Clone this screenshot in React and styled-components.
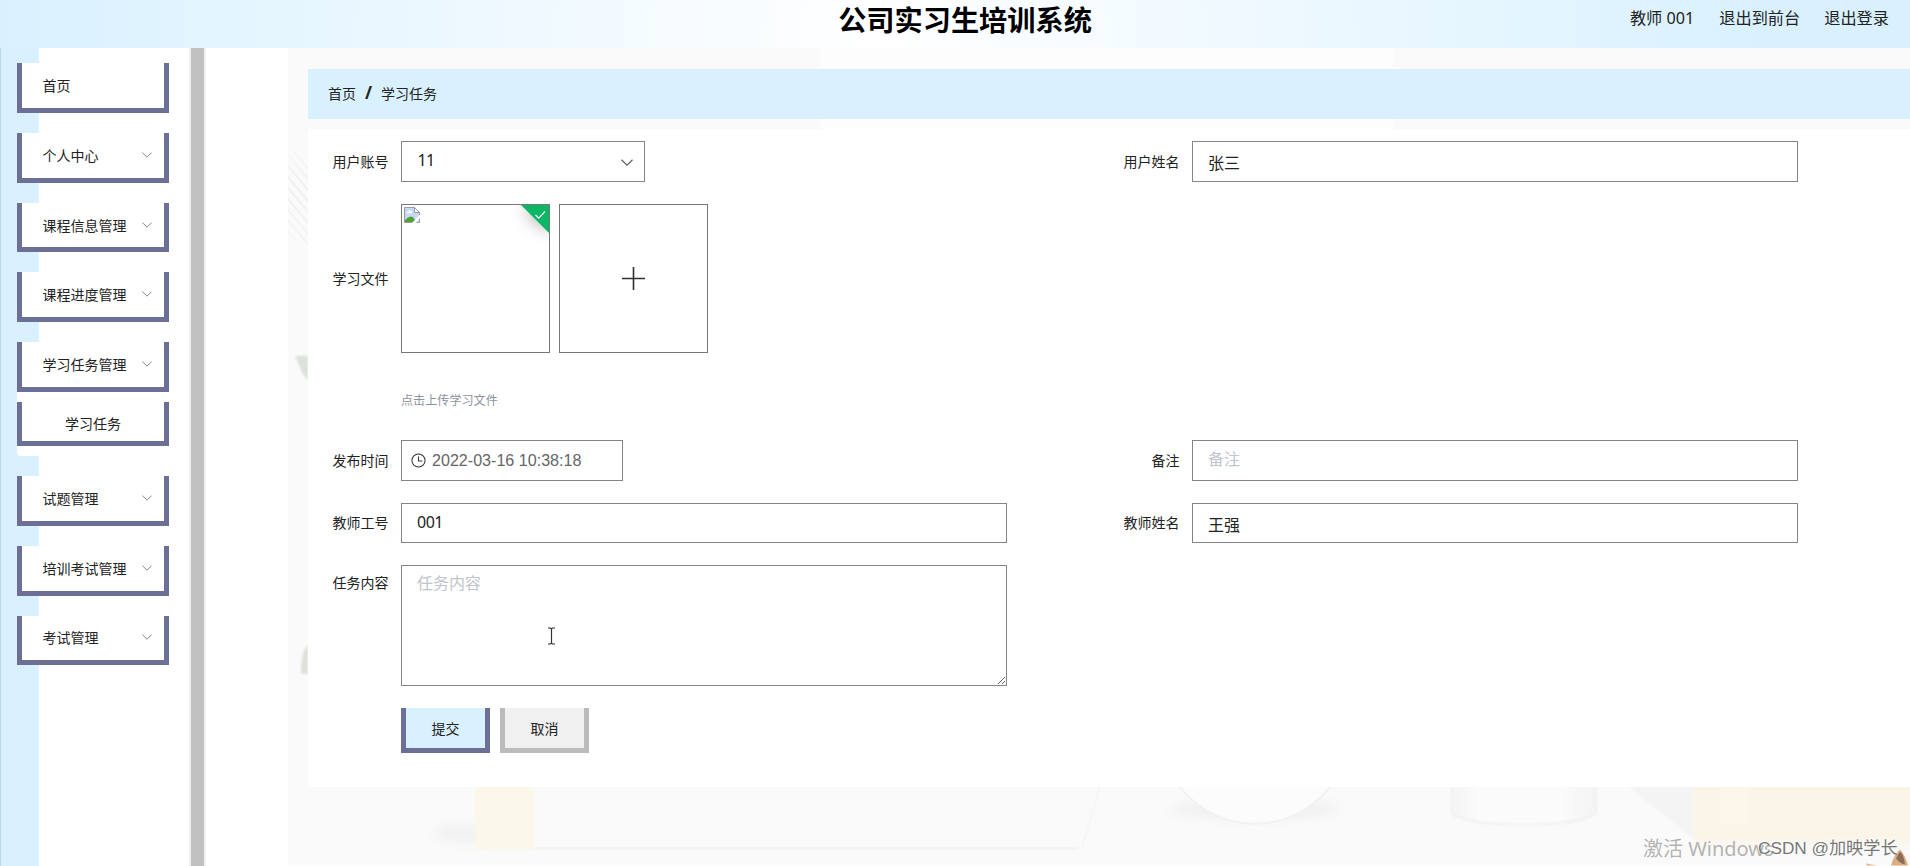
import React, { useState } from 'react'
import styled, { createGlobalStyle, css } from 'styled-components'

const menus = [
  { name: '首页' },
  { name: '个人中心', children: [] },
  { name: '课程信息管理', children: [] },
  { name: '课程进度管理', children: [] },
  { name: '学习任务管理', children: ['学习任务'] },
  { name: '试题管理', children: [] },
  { name: '培训考试管理', children: [] },
  { name: '考试管理', children: [] },
]

const Arrow = ({ width, color }) => (
  <svg width={width} height={width * 0.6} viewBox="0 0 10 6" fill="none" stroke={color}>
    <path d="M0.4 0.6 L5 5.2 L9.6 0.6" strokeWidth="1" />
  </svg>
)

const Scene = () => (
  <Backdrop viewBox="0 0 1622 818" preserveAspectRatio="none">
    <defs>
      <filter id="soft" x="-30%" y="-80%" width="160%" height="260%">
        <feGaussianBlur stdDeviation="6" />
      </filter>
      <filter id="edge">
        <feGaussianBlur stdDeviation="1" />
      </filter>
      <pattern id="weave" width="7" height="7" patternUnits="userSpaceOnUse" patternTransform="rotate(-40)">
        <path d="M1 0V7" stroke="#eef0ed" strokeWidth="2" />
      </pattern>
      <linearGradient id="weaveFade" x1="0" y1="0" x2="0" y2="1">
        <stop offset="0" stopColor="#fafafa" />
        <stop offset="0.4" stopColor="#fafafa" stopOpacity="0" />
        <stop offset="1" stopColor="#fafafa" stopOpacity="0.6" />
      </linearGradient>
      <linearGradient id="sand" x1="0" y1="0" x2="0" y2="1">
        <stop offset="0.75" stopColor="#faf5e7" />
        <stop offset="1" stopColor="#faf5e7" stopOpacity="0" />
      </linearGradient>
      <linearGradient id="cup" x1="0" y1="0" x2="1" y2="0">
        <stop offset="0" stopColor="#f5f5f5" />
        <stop offset="0.2" stopColor="#fbfbfb" />
        <stop offset="0.75" stopColor="#fbfbfb" />
        <stop offset="1" stopColor="#f4f4f4" />
      </linearGradient>
    </defs>
    <path d="M0 0H1622V818H0Z" fill="#fafafa" />
    <path d="M532 0H905V81H532Z" fill="#fdfdfd" />
    <path d="M905 0H1105V81H905Z" fill="#fdfdfd" />
    {/* left edge: blanket and table corners */}
    <path d="M0 92 L20 112 V205 L0 185Z" fill="url(#weave)" />
    <path d="M0 92H20V205H0Z" fill="url(#weaveFade)" />
    <path d="M7 308H20V333L14 325Z" fill="#dde1db" filter="url(#edge)" />
    <path d="M15 605L20 597V626H13V618Z" fill="#dde0da" filter="url(#edge)" />
    {/* book */}
    <ellipse cx="176" cy="786" rx="30" ry="9" fill="#f1f1f1" filter="url(#soft)" />
    <path d="M187 730H246V802H187Z" fill="#fbf7ea" filter="url(#edge)" />
    <path d="M246 799.5H790V802.5H246Z" fill="#f4f4f4" />
    <path d="M794 800L812 738" stroke="#f6f6f6" strokeWidth="2" />
    {/* plate */}
    <ellipse cx="967" cy="762" rx="85" ry="9" fill="#efefef" filter="url(#soft)" />
    <path d="M888 735Q920 776 967 776T1046 735Z" fill="#fcfcfc" stroke="#f2f2f2" strokeWidth="2" />
    {/* cup */}
    <path d="M1164 730V766Q1180 777 1236 777T1308 766V730Z" fill="url(#cup)" stroke="#f0f0f0" strokeWidth="2" filter="url(#edge)" />
    <path d="M1336 735H1406V792Z" fill="#f4f4f4" filter="url(#edge)" />
    <path d="M1406 735H1622V805H1406Z" fill="url(#sand)" />
    <path d="M1432 735H1461V775H1432Z" fill="#fcf7ea" />
    {/* puppy */}
    <path d="M1603 818Q1606 807 1612 802Q1617 807 1620 818Z" fill="#dcae82" />
    <path d="M1608 811L1612 804Q1616 808 1617 817Q1612 816 1608 811Z" fill="#8c6b58" />
    <path d="M1578 816L1589 818H1579Z" fill="#e2b386" />
  </Backdrop>
)

const BrokenImage = () => (
  <svg width="16" height="16" viewBox="0 0 16 16">
    <path d="M0.5 0.5H10.5L15.5 5.5V15.5H0.5Z" fill="#c6d8f6" stroke="#9a9a9a" />
    <path d="M10.5 0.5V5.5H15.5Z" fill="#fff" stroke="#9a9a9a" />
    <path d="M2.5 6.2Q2.5 4.4 4.3 4.4Q5 2.6 6.7 3.4Q8.4 3.6 8.3 6.2Z" fill="#fff" />
    <path d="M1 15V13Q5 8 9 10L12 15Z" fill="#4fa336" />
    <path d="M8 16L16 7.5V11L12 16Z" fill="#fff" />
  </svg>
)

export default () => {
  const [content, setContent] = useState('')
  const [remark, setRemark] = useState('')

  return (
    <Page>
      <GlobalStyle />
      <Header>
        <Title>公司实习生培训系统</Title>
        <HeaderLinks>
          <HeaderLink $gap={25}>教师 001</HeaderLink>
          <HeaderLink $gap={24}>退出到前台</HeaderLink>
          <HeaderLink>退出登录</HeaderLink>
        </HeaderLinks>
      </Header>
      <Body>
        <Aside>
          <Menu>
            {menus.map(({ name, children }) => (
              <MenuGroup key={name}>
                <MenuItem>
                  {name}
                  {children && <Arrow width={10} color="#83868c" />}
                </MenuItem>
                {children && children.length > 0 && (
                  <SubMenu>
                    {children.map(child => (
                      <SubItem key={child}>{child}</SubItem>
                    ))}
                  </SubMenu>
                )}
              </MenuGroup>
            ))}
          </Menu>
          <Scrollbar />
        </Aside>
        <Main>
          <Scene />
          <Content>
            <Breadcrumb>
              <span>首页</span>
              <Slash>/</Slash>
              <span>学习任务</span>
            </Breadcrumb>
            <Form>
              <Row>
                <Field>
                  <Label>用户账号</Label>
                  <Select>
                    <span>11</span>
                    <Arrow width={12} color="#606266" />
                  </Select>
                </Field>
                <Field>
                  <Label>用户姓名</Label>
                  <Input defaultValue="张三" $cjk />
                </Field>
              </Row>
              <Field>
                <Label>学习文件</Label>
                <Uploads>
                  <Picture>
                    <BrokenImage />
                    <Done>
                      <svg width="28" height="28" viewBox="0 0 28 28" fill="none">
                        <path d="M0 0H28V28Z" fill="#0bb765" />
                        <path d="M14.5 10L17.7 13.2L24 6.5" stroke="#fff" strokeWidth="1.1" />
                      </svg>
                    </Done>
                  </Picture>
                  <Picture $center>
                    <svg width="23" height="23" viewBox="0 0 23 23" stroke="#303133" strokeWidth="1.6">
                      <path d="M11.5 0V23M0 11.5H23" />
                    </svg>
                  </Picture>
                </Uploads>
              </Field>
              <Tip>点击上传学习文件</Tip>
              <Row>
                <Field>
                  <Label>发布时间</Label>
                  <DateInput>
                    <svg width="15" height="15" viewBox="0 0 16 16" fill="none" stroke="#303133">
                      <circle cx="8" cy="8" r="7" strokeWidth="1.1" />
                      <path d="M8 3.8V8.5H12" strokeWidth="1.1" />
                    </svg>
                    2022-03-16 10:38:18
                  </DateInput>
                </Field>
                <Field>
                  <Label>备注</Label>
                  <Input placeholder="备注" value={remark} onChange={e => setRemark(e.target.value)} />
                </Field>
              </Row>
              <Row>
                <Field>
                  <Label>教师工号</Label>
                  <Input defaultValue="001" />
                </Field>
                <Field>
                  <Label>教师姓名</Label>
                  <Input defaultValue="王强" $cjk />
                </Field>
              </Row>
              <Field $top>
                <Label>任务内容</Label>
                <Textarea placeholder="任务内容" value={content} onChange={e => setContent(e.target.value)} />
              </Field>
              <Buttons>
                <Button $primary>提交</Button>
                <Button>取消</Button>
              </Buttons>
            </Form>
          </Content>
        </Main>
      </Body>
      <Cursor width="9" height="18" viewBox="0 0 9 18" fill="none" stroke="#333">
        <path d="M1 1H3.5L4.5 2L5.5 1H8M4.5 2V16M1 17H3.5L4.5 16L5.5 17H8" strokeWidth="1.2" />
      </Cursor>
      <Activate>激活 Windows</Activate>
      <Watermark>CSDN @加映学长</Watermark>
    </Page>
  )
}

const GlobalStyle = createGlobalStyle`
  * { box-sizing: border-box; }
  body {
    margin: 0;
    overflow: hidden;
    font-family: 'Noto Sans', 'Noto Sans CJK SC', sans-serif;
    font-size: 14px;
    color: #222;
  }
`

const Page = styled.div`
  position: relative;
  display: flex;
  flex-direction: column;
  width: 1910px;
  height: 866px;
  overflow: hidden;
  background: #fff;
`

const Header = styled.header`
  display: grid;
  grid-template-columns: 1fr auto 1fr;
  height: 48.4px;
  flex: none;
  padding: 0 21px 0 0;
  background: radial-gradient(circle at 880px 40px, #fff 0, #d9f1ff 880px);
`

const Title = styled.h1`
  grid-column: 2;
  margin: 0 0 0 41px;
  font: bold 28.2px/38px 'Noto Sans CJK SC', sans-serif;
  color: #000;
`

const HeaderLinks = styled.nav`
  display: flex;
  justify-content: flex-end;
`

const HeaderLink = styled.span`
  margin-right: ${p => p.$gap || 0}px;
  font-size: 16.2px;
  line-height: 37px;
`

const Body = styled.div`
  display: flex;
  flex: 1;
  min-height: 0;
`

const Aside = styled.aside`
  display: flex;
  justify-content: space-between;
  width: 206px;
  border-left: 1px solid #bcd8e8;
  background: linear-gradient(to right, #d9f1ff 37px, #fff 39px);
`

const Menu = styled.div`
  width: 152px;
  margin: 15px 0 0 16px;
`

const MenuGroup = styled.div`
  margin-bottom: 20px;
`

const box = css`
  border: solid #6d7096;
  border-width: 0 5px 5px;
  background: #fff;
`

const MenuItem = styled.div`
  ${box};
  display: flex;
  align-items: center;
  justify-content: space-between;
  height: 49.7px;
  padding: 0 12px 1px 20.5px;
`

const SubMenu = styled.div`
  padding: 10px 0;
  border-radius: 0 0 4px 4px;
  background: #fff;
`

const SubItem = styled.div`
  ${box};
  height: 44.3px;
  line-height: 44px;
  text-align: center;
`

const Scrollbar = styled.div`
  width: 17px;
  border: solid #f1f1f1;
  border-width: 0 2px;
  background: #c1c1c1;
`

const Main = styled.main`
  position: relative;
  flex: 1;
  margin-left: 82px;
  padding: 20.6px 0 0 20px;
`

const Backdrop = styled.svg`
  position: absolute;
  inset: 0;
  width: 100%;
  height: 100%;
`

const Content = styled.div`
  position: relative;
`

const Breadcrumb = styled.div`
  display: flex;
  align-items: center;
  height: 50px;
  padding: 0 20px 2px;
  background: #d9f1ff;
`

const Slash = styled.b`
  width: 25px;
  text-align: center;
  font-size: 17px;
`

const Form = styled.form`
  display: flex;
  flex-direction: column;
  height: 658px;
  margin-top: 10px;
  padding: 12px 0 0 13px;
  background: #fff;
`

const Row = styled.div`
  display: grid;
  grid-template-columns: 791px 791px;
`

const Field = styled.div`
  display: flex;
  align-items: ${p => (p.$top ? 'flex-start' : 'center')};
  margin-bottom: 22px;
  ${p => p.$top && css`
    ${Label} { line-height: 36px; }
  `}
`

const Label = styled.label`
  width: 80px;
  padding: 0 12.5px 1px 0;
  text-align: right;
`

const control = css`
  border: 1px solid #858585;
  background: #fff;
  outline: none;
  color: #222;
  font-family: inherit;
`

const Select = styled.div`
  ${control};
  display: flex;
  align-items: center;
  justify-content: space-between;
  width: 244px;
  height: 40.6px;
  padding: 0 11px 0 15.5px;
  font-size: 16px;
  letter-spacing: -0.6px;
  span { margin-top: -2px; }
  svg { margin-top: 3px; }
`

const Input = styled.input`
  ${control};
  width: 605.5px;
  height: 40.6px;
  padding: ${p => (p.$cjk ? '2px 15px 0' : '0 15px 2px')};
  font-size: 16px;
  letter-spacing: ${p => (p.$cjk || p.placeholder ? 0 : -0.5)}px;
  &::placeholder { color: #c0c4cc; }
`

const Textarea = styled.textarea`
  ${control};
  width: 605.5px;
  height: 121px;
  padding: 5px 15px;
  font-size: 16px;
  line-height: 24px;
  &::placeholder { color: #c0c4cc; }
`

const DateInput = styled.div`
  ${control};
  display: flex;
  align-items: center;
  gap: 6px;
  width: 222px;
  height: 40.6px;
  padding: 0 0 0 9px;
  font-family: 'Liberation Sans', sans-serif;
  font-size: 16.1px;
  color: #666;
`

const Uploads = styled.div`
  display: flex;
  gap: 8.5px;
`

const Picture = styled.div`
  position: relative;
  display: flex;
  width: 149px;
  height: 149.5px;
  padding: 2px;
  border: 1px solid #777;
  overflow: hidden;
  ${p => p.$center && css`
    align-items: center;
    justify-content: center;
  `}
`

const Done = styled.div`
  position: absolute;
  top: 0;
  right: 0;
  line-height: 0;
  filter: drop-shadow(0 2px 8px rgba(0, 0, 0, 0.3));
`

const Tip = styled.div`
  margin: 13px 0 26px 80px;
  font-size: 12.1px;
  line-height: 26px;
  color: #8d939e;
`

const Buttons = styled.div`
  display: flex;
  gap: 10px;
  margin-left: 80px;
`

const Button = styled.button.attrs({ type: 'button' })`
  width: 89px;
  height: 44.5px;
  padding: 0;
  border: solid ${p => (p.$primary ? '#6d7096' : '#bbb')};
  border-width: 0 5px 5px;
  background: ${p => (p.$primary ? '#d9f1ff' : '#f0f0f0')};
  color: #222;
  font: 14px 'Noto Sans CJK SC', sans-serif;
`

const Cursor = styled.svg`
  position: absolute;
  left: 547px;
  top: 627px;
`

const Activate = styled.div`
  position: absolute;
  left: 1643px;
  top: 833px;
  font-size: 20px;
  line-height: 32px;
  color: rgba(130, 130, 130, 0.6);
`

const Watermark = styled.div`
  position: absolute;
  left: 1758px;
  top: 835px;
  font: 17.2px/26px 'Liberation Sans', 'Noto Sans CJK SC', sans-serif;
  color: #777;
  text-shadow: -1px -1px 0 #fff;
  white-space: nowrap;
`
